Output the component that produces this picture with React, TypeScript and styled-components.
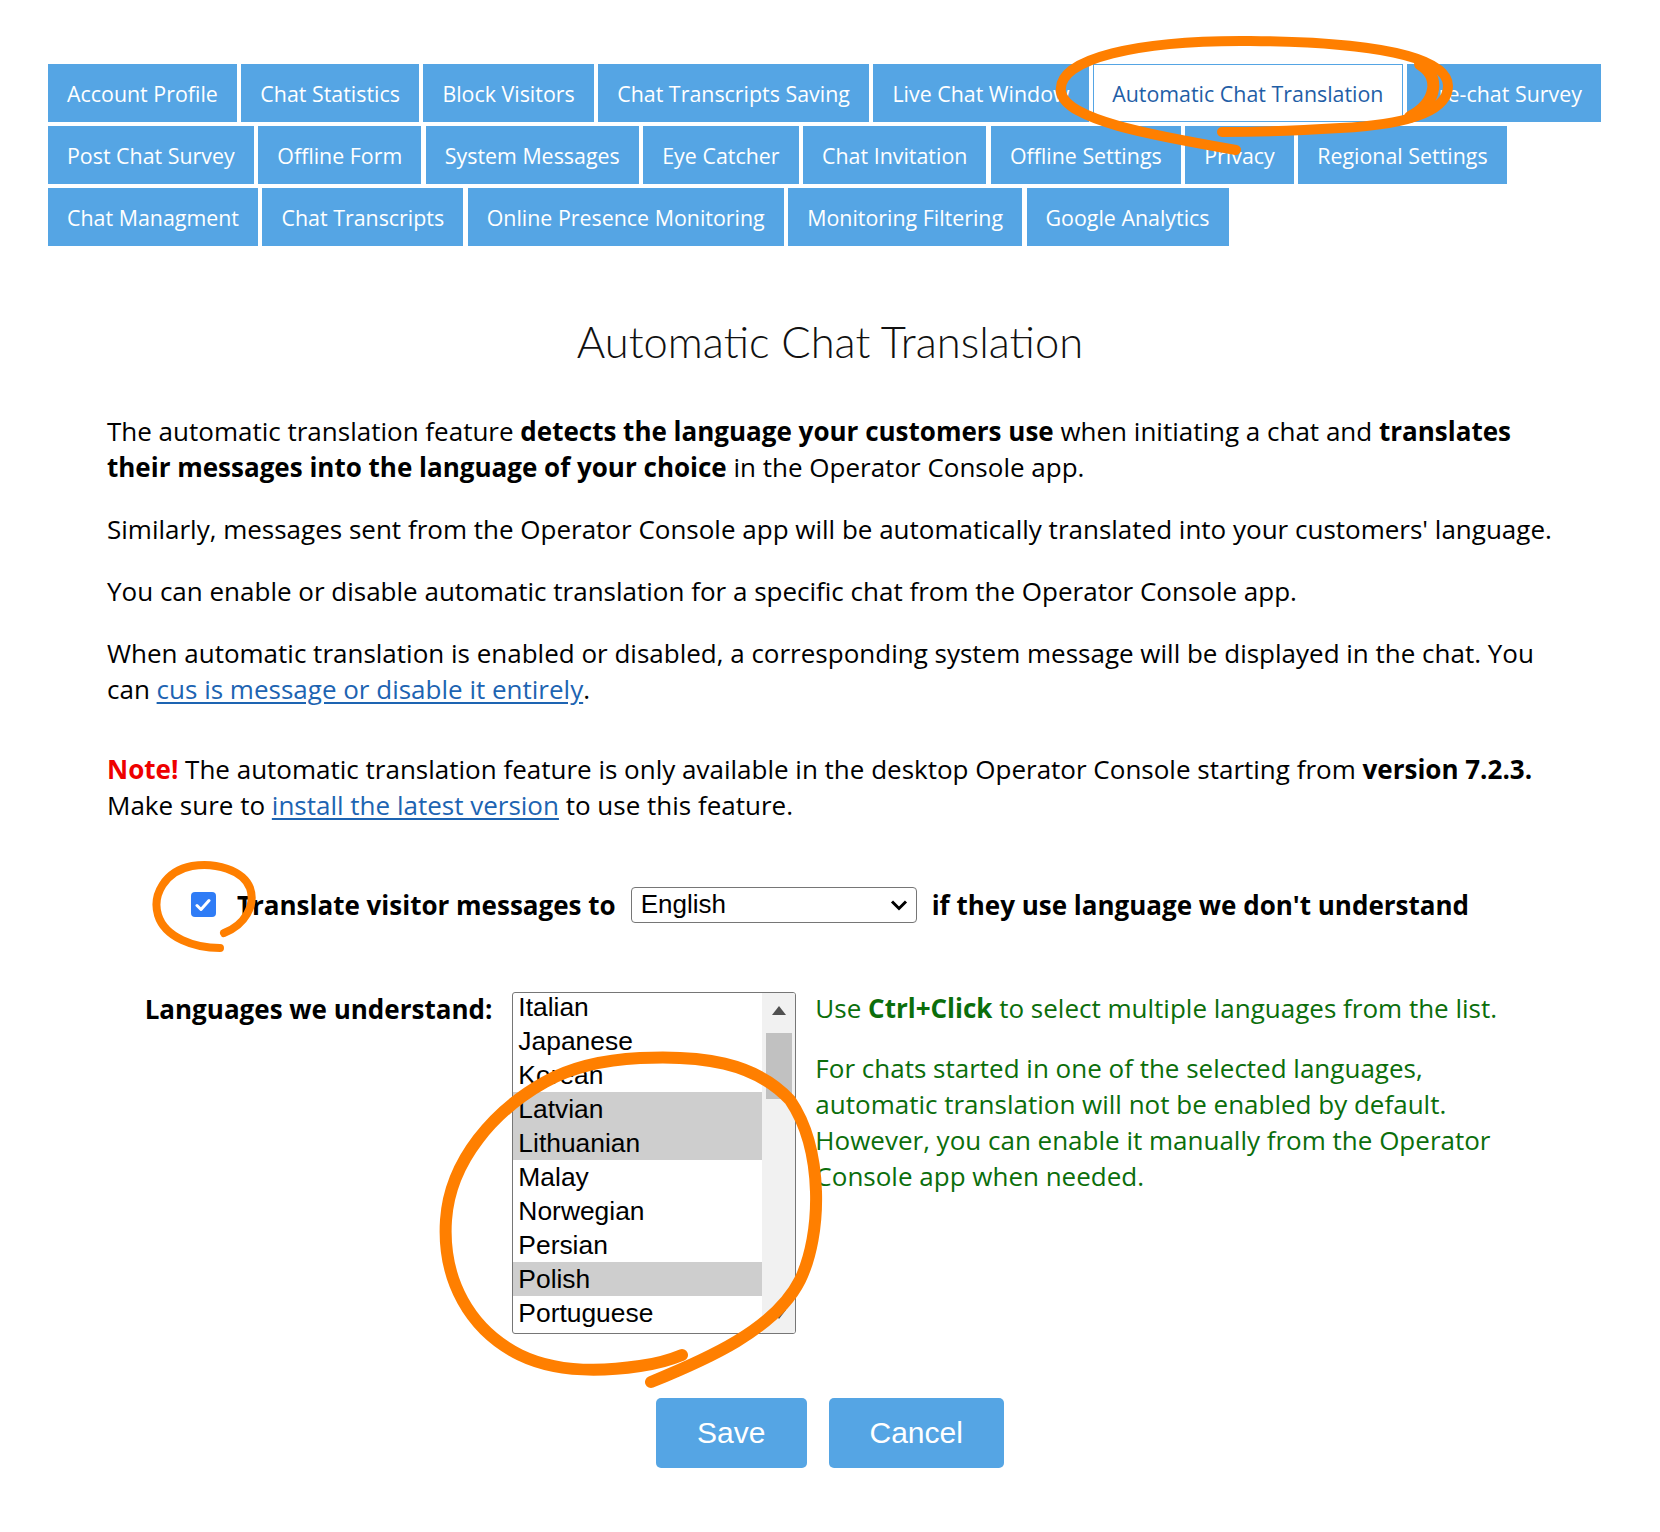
import React from 'react';
import styled, { createGlobalStyle } from 'styled-components';

const BLUE = '#55a5e4';
const ORANGE = '#ff7f00';

const GlobalStyle = createGlobalStyle`
  body {
    margin: 0;
    background: #ffffff;
    font-family: "Open Sans", "Liberation Sans", sans-serif;
    color: #000000;
  }
`;

const Page = styled.div`
  position: relative;
  box-sizing: border-box;
  width: 1660px;
  min-height: 1532px;
  padding: 64px 48px 60px;
`;

const TabBar = styled.nav`
  display: flex;
  flex-wrap: wrap;
  gap: 4px 4.5px;
  width: 1600px;
`;

const Tab = styled.a<{ $active?: boolean }>`
  box-sizing: border-box;
  height: 58px;
  display: flex;
  align-items: center;
  padding: 0 18px;
  font-size: 21.4px;
  white-space: nowrap;
  text-decoration: none;
  border: 1.5px solid ${BLUE};
  background: ${(p) => (p.$active ? '#ffffff' : BLUE)};
  color: ${(p) => (p.$active ? '#1f5ea6' : '#ffffff')};
`;

const Title = styled.h1`
  margin: 69px 0 0;
  text-align: center;
  font-family: Lato, "Open Sans", sans-serif;
  font-weight: 300;
  font-size: 43.5px;
  line-height: 52.8px;
  color: #111111;
`;

const Content = styled.div`
  margin: 45px 0 0 59px;
  width: 1455px;
`;

const Paragraph = styled.p<{ $gap?: number }>`
  margin: ${(p) => p.$gap ?? 0}px 0 26px;
  font-size: 26px;
  line-height: 36px;
`;

const Link = styled.a`
  color: #1d64b2;
  text-decoration: underline;
  text-underline-offset: 3px;
`;

const NoteMark = styled.b`
  color: #ee0000;
`;

const OptionRow = styled.div`
  display: flex;
  align-items: center;
  justify-content: center;
  margin-top: 64px;
  height: 36px;
  font-size: 26px;
  font-weight: 700;
`;

const CheckBox = styled.span`
  flex: none;
  display: flex;
  align-items: center;
  justify-content: center;
  width: 25px;
  height: 25px;
  margin-right: 21px;
  border-radius: 4px;
  background: #2f7cf6;
`;

const SelectBox = styled.div`
  box-sizing: border-box;
  display: flex;
  align-items: center;
  justify-content: space-between;
  width: 286px;
  height: 36px;
  margin: 0 15px;
  padding: 0 8px 0 9px;
  border: 1.5px solid #767676;
  border-radius: 4px;
  font-family: "Liberation Sans", Arial, sans-serif;
  font-weight: 400;
  font-size: 26px;
  color: #000000;
`;

const LanguagesRow = styled.div`
  display: flex;
  align-items: flex-start;
  justify-content: center;
  margin-top: 68px;
`;

const FieldLabel = styled.div`
  margin: 0 20px 0 0;
  font-size: 26px;
  line-height: 36px;
  font-weight: 700;
`;

const ListBox = styled.div`
  box-sizing: border-box;
  display: flex;
  width: 284px;
  height: 342px;
  margin-top: 1px;
  border: 1.5px solid #767676;
  border-radius: 3px;
  overflow: hidden;
`;

const Options = styled.div`
  flex: 1;
  margin-top: -2.5px;
`;

const Option = styled.div<{ $selected?: boolean }>`
  height: 34px;
  padding-left: 5px;
  font-family: "Liberation Sans", Arial, sans-serif;
  font-size: 26.4px;
  line-height: 34px;
  color: #000000;
  background: ${(p) => (p.$selected ? '#cecece' : 'transparent')};
`;

const ScrollTrack = styled.div`
  display: flex;
  flex-direction: column;
  align-items: center;
  width: 33.5px;
  background: #f1f1f1;
`;

const ArrowBox = styled.div`
  display: flex;
  align-items: center;
  justify-content: center;
  height: 36px;
  flex: none;
`;

const Thumb = styled.div<{ $top: number; $height: number }>`
  width: 26px;
  height: ${(p) => p.$height}px;
  margin-top: ${(p) => p.$top}px;
  background: #c1c1c1;
`;

const Spacer = styled.div`
  flex: 1;
`;

const HelpText = styled.div`
  width: 700px;
  margin: -1px 0 0 19px;
  color: #0b6e0b;
  font-size: 26px;
  line-height: 36px;
`;

const HelpParagraph = styled.p`
  margin: 0 0 24px;
`;

const ButtonRow = styled.div`
  display: flex;
  justify-content: center;
  gap: 22px;
  margin-top: 64px;
`;

const Button = styled.button`
  height: 70px;
  padding: 0 41px;
  border: none;
  border-radius: 5px;
  background: ${BLUE};
  color: #ffffff;
  font-family: "Liberation Sans", Arial, sans-serif;
  font-size: 30px;
`;

const Annotations = styled.svg`
  position: absolute;
  top: 0;
  left: 0;
  pointer-events: none;
`;

const tabs = [
  'Account Profile',
  'Chat Statistics',
  'Block Visitors',
  'Chat Transcripts Saving',
  'Live Chat Window',
  'Automatic Chat Translation',
  'Pre-chat Survey',
  'Post Chat Survey',
  'Offline Form',
  'System Messages',
  'Eye Catcher',
  'Chat Invitation',
  'Offline Settings',
  'Privacy',
  'Regional Settings',
  'Chat Managment',
  'Chat Transcripts',
  'Online Presence Monitoring',
  'Monitoring Filtering',
  'Google Analytics',
];

const languages = [
  { name: 'Italian' },
  { name: 'Japanese' },
  { name: 'Korean' },
  { name: 'Latvian', selected: true },
  { name: 'Lithuanian', selected: true },
  { name: 'Malay' },
  { name: 'Norwegian' },
  { name: 'Persian' },
  { name: 'Polish', selected: true },
  { name: 'Portuguese' },
];

const Chevron = () => (
  <svg width="18" height="12" viewBox="0 0 18 12">
    <path d="M2 2.5 L9 9.5 L16 2.5" fill="none" stroke="#000" strokeWidth="3" />
  </svg>
);

const CheckMark = () => (
  <svg width="16" height="14" viewBox="0 0 16 14">
    <path
      d="M2 7.5 L6 11.5 L14 2.5"
      fill="none"
      stroke="#fff"
      strokeWidth="3"
      strokeLinecap="round"
      strokeLinejoin="round"
    />
  </svg>
);

const Triangle = ({ up }: { up?: boolean }) => (
  <svg width="14" height="9" viewBox="0 0 14 9">
    <path d={up ? 'M0 9 L7 0 L14 9 Z' : 'M0 0 L7 9 L14 0 Z'} fill="#505050" />
  </svg>
);

const App: React.FC = () => {
  return (
    <Page>
      <GlobalStyle />
      <TabBar>
        {tabs.map((t) => (
          <Tab key={t} $active={t === 'Automatic Chat Translation'}>
            {t}
          </Tab>
        ))}
      </TabBar>

      <Title>Automatic Chat Translation</Title>

      <Content>
        <Paragraph>
          The automatic translation feature <b>detects the language your customers use</b> when
          initiating a chat and <b>translates their messages into the language of your choice</b> in
          the Operator Console app.
        </Paragraph>
        <Paragraph>
          Similarly, messages sent from the Operator Console app will be automatically translated
          into your customers' language.
        </Paragraph>
        <Paragraph>
          You can enable or disable automatic translation for a specific chat from the Operator
          Console app.
        </Paragraph>
        <Paragraph>
          When automatic translation is enabled or disabled, a corresponding system message will be
          displayed in the chat. You can <Link href="#">cus is message or disable it entirely</Link>.
        </Paragraph>
        <Paragraph $gap={44}>
          <NoteMark>Note!</NoteMark> The automatic translation feature is only available in the
          desktop Operator Console starting from <b>version 7.2.3.</b> Make sure to{' '}
          <Link href="#">install the latest version</Link> to use this feature.
        </Paragraph>
      </Content>

      <OptionRow>
        <CheckBox role="checkbox" aria-checked="true">
          <CheckMark />
        </CheckBox>
        <span>Translate visitor messages to</span>
        <SelectBox>
          <span>English</span>
          <Chevron />
        </SelectBox>
        <span>if they use language we don't understand</span>
      </OptionRow>

      <LanguagesRow>
        <FieldLabel>Languages we understand:</FieldLabel>
        <ListBox>
          <Options>
            {languages.map((l) => (
              <Option key={l.name} $selected={l.selected}>
                {l.name}
              </Option>
            ))}
          </Options>
          <ScrollTrack>
            <ArrowBox>
              <Triangle up />
            </ArrowBox>
            <Thumb $top={4} $height={66} />
            <Spacer />
            <ArrowBox>
              <Triangle />
            </ArrowBox>
          </ScrollTrack>
        </ListBox>
        <HelpText>
          <HelpParagraph>
            Use <b>Ctrl+Click</b> to select multiple languages from the list.
          </HelpParagraph>
          <HelpParagraph>
            For chats started in one of the selected languages, automatic translation will not be
            enabled by default. However, you can enable it manually from the Operator Console app
            when needed.
          </HelpParagraph>
        </HelpText>
      </LanguagesRow>

      <ButtonRow>
        <Button>Save</Button>
        <Button>Cancel</Button>
      </ButtonRow>

      <Annotations width="1660" height="1532" viewBox="0 0 1660 1532">
        <g fill="none" stroke={ORANGE} strokeLinecap="round" strokeLinejoin="round">
          <path
            strokeWidth="10"
            d="M1236 150 C1150 135 1066 120 1061 92 C1056 58 1140 40 1250 41 C1370 42 1448 56 1448 86 C1448 114 1400 125 1340 128 C1290 131 1245 132 1222 132"
          />
          <path strokeWidth="12" d="M1420 64 C1440 76 1438 102 1410 117" />
          <path
            strokeWidth="8"
            d="M224 933 C245 925 256 905 250 888 C243 870 215 862 192 866 C165 871 152 895 158 915 C165 938 195 948 220 948"
          />
          <path
            strokeWidth="12"
            d="M651 1382 C705 1360 775 1330 800 1280 C822 1235 824 1150 790 1100 C755 1062 700 1055 640 1058 C600 1060 570 1068 545 1082 C495 1110 450 1160 446 1220 C442 1280 470 1330 520 1355 C555 1372 600 1372 640 1366 C655 1364 670 1360 682 1355"
          />
        </g>
      </Annotations>
    </Page>
  );
};

export default App;
